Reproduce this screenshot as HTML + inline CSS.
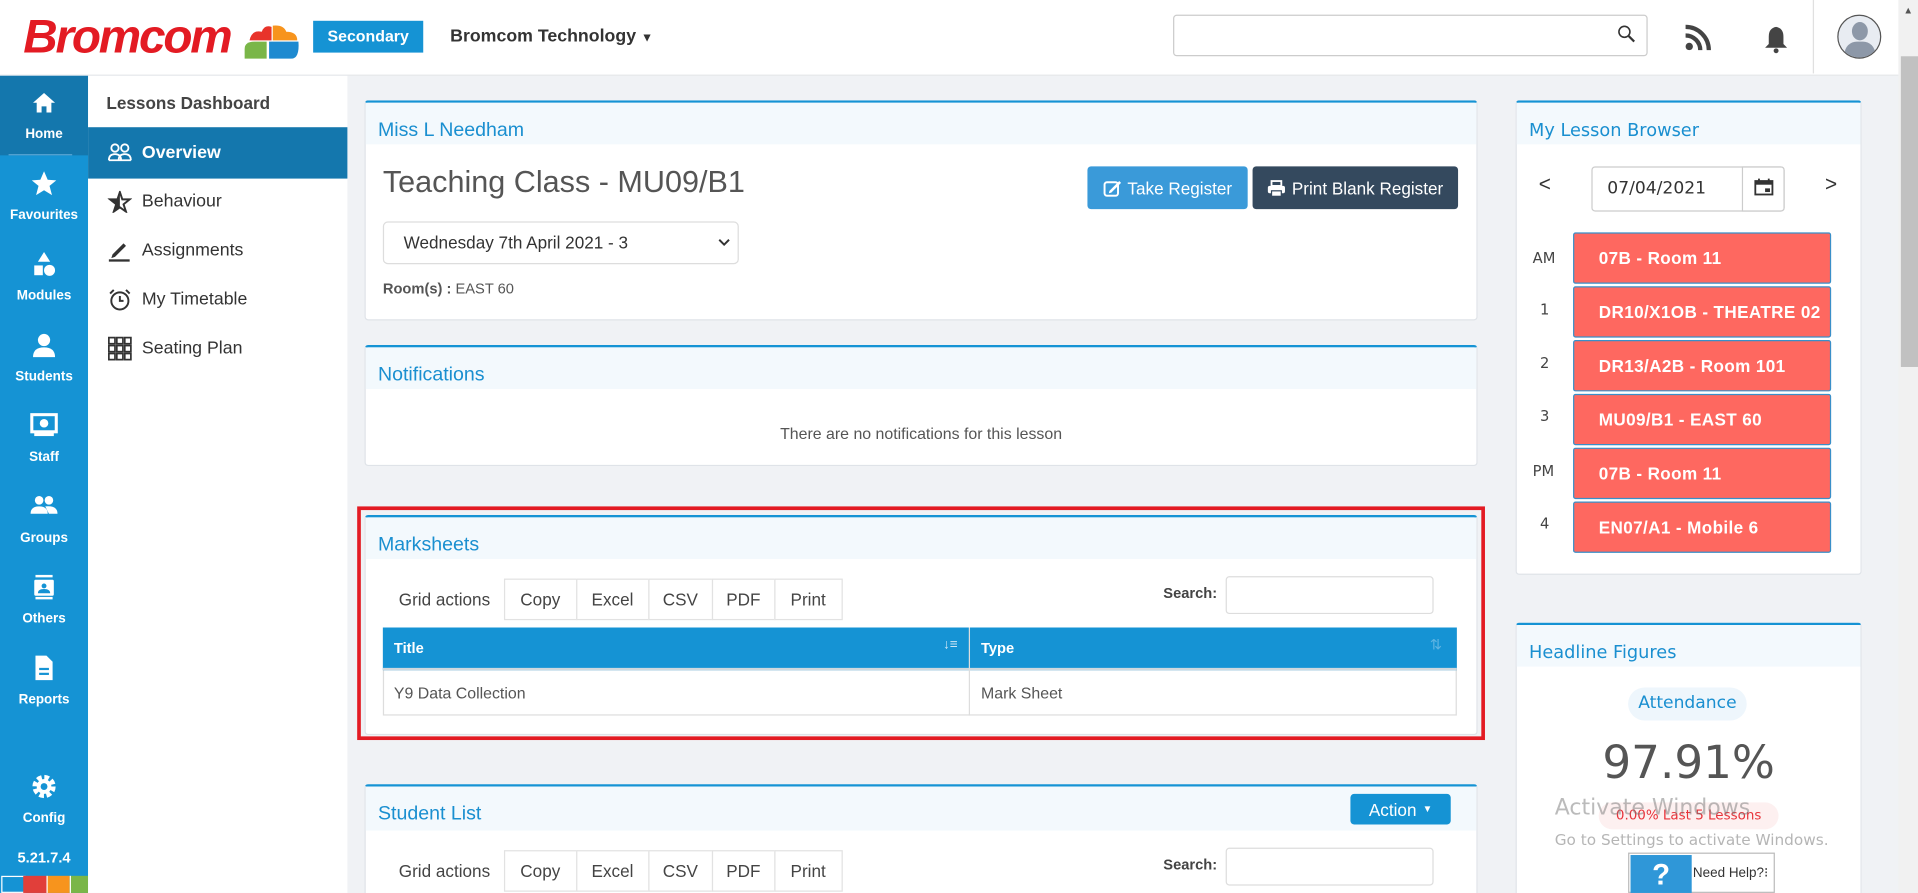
<!DOCTYPE html>
<html><head><meta charset="utf-8">
<style>
*{box-sizing:border-box;margin:0;padding:0}
html,body{width:1918px;height:893px;overflow:hidden;background:#f0f2f5;font-family:"Liberation Sans",Arial,sans-serif}
#w{position:absolute;left:0;top:0;width:1568px;height:730px;transform:scale(1.22321);transform-origin:0 0;background:#f0f2f5;overflow:hidden}
.a{position:absolute}
.top{left:0;top:0;width:1552px;height:62px;background:#fff;border-bottom:1px solid #e4e6ea}
.nav1{left:0;top:62px;width:72px;height:668px;background:#1593d4}
.ni{position:absolute;left:0;width:72px;text-align:center;color:#fff;font-size:11px;font-weight:bold}
.nav2{left:72px;top:62px;width:212px;height:668px;background:#fff}
.n2{position:absolute;left:16px;font-size:14.5px;color:#333;display:flex;align-items:center;gap:8px}
.card{position:absolute;background:#fff;border:1px solid #dfe3e8;border-top:2px solid #1593d4;border-radius:3px}
.ch{background:#f3f9fd;height:34px;padding-left:10px;font-size:16px;color:#1a8fd0;line-height:42px}
.btn{position:absolute;color:#fff;font-size:14px;border-radius:3px;display:flex;align-items:center;justify-content:center;gap:5px}
.ga{position:absolute;display:flex;align-items:center;font-size:14px;color:#444}
.ga .g{border:1px solid #e2e2e2;height:34px;line-height:32px;text-align:center;margin-left:-1px;background:#fff}
.lb{position:absolute;left:47px;width:211px;height:42px;background:#fe6860;border:1px solid #3a8fc8;border-radius:2px;color:#fff;font-weight:bold;font-size:14px;line-height:40px;padding-left:20px;font-family:"Liberation Sans",sans-serif;letter-spacing:.3px;white-space:nowrap}
.ll{position:absolute;left:14px;font-size:12px;color:#444;font-family:"DejaVu Sans",sans-serif}
</style></head><body><div id="w">

<div class="a top"></div>
<div class="a" style="left:19px;top:11px;font-size:39px;font-weight:bold;font-style:italic;color:#e31b23;letter-spacing:-1.8px;line-height:40px">Bromcom</div>
<svg class="a" style="left:198px;top:20px" width="48" height="28" viewBox="0 0 48 28"><path d="M2 28 L2 20 Q2 14 10 14 L20 14 L20 28Z" fill="#7ab648"/><path d="M22 14 L46 14 Q47 28 40 28 L22 28Z" fill="#1e8ad0"/><path d="M6 13 Q8 4 16 6 Q18 0 24 2 L24 13Z" fill="#e8332a"/><path d="M25 1 Q34 0 36 6 Q45 6 45 13 L25 13Z" fill="#f7941d"/></svg>
<div class="a" style="left:256px;top:17px;width:90px;height:26px;background:#1593d4;color:#fff;font-weight:bold;font-size:13px;line-height:26px;text-align:center">Secondary</div>
<div class="a" style="left:368px;top:22px;font-size:14.5px;font-weight:bold;color:#333">Bromcom Technology <span style="font-size:10px">▼</span></div>
<div class="a" style="left:959px;top:12px;width:388px;height:34px;border:1px solid #ccc;border-radius:3px"></div>
<svg class="a" style="left:1322px;top:20px" width="16" height="16" viewBox="0 0 16 16"><circle cx="6" cy="6" r="4.5" stroke="#333" stroke-width="1.3" fill="none"/><path d="M9.5 9.5 L14 14" stroke="#333" stroke-width="1.8"/></svg>
<svg class="a" style="left:1377px;top:20px" width="22" height="22" viewBox="0 0 22 22"><circle cx="4" cy="18" r="3" fill="#444"/><path d="M1 9 A12 12 0 0 1 13 21" stroke="#444" stroke-width="3.5" fill="none"/><path d="M1 2 A19 19 0 0 1 20 21" stroke="#444" stroke-width="3.5" fill="none"/></svg>
<svg class="a" style="left:1442px;top:20px" width="20" height="24" viewBox="0 0 20 24"><path d="M10 2 Q16 3 16 10 L16 16 L19 19 L1 19 L4 16 L4 10 Q4 3 10 2Z" fill="#444"/><circle cx="10" cy="21.5" r="2" fill="#444"/></svg>
<div class="a" style="left:1482px;top:0;width:1px;height:60px;background:#e0e0e0"></div>
<div class="a" style="left:1502px;top:12px;width:36px;height:36px;border-radius:50%;border:1px solid #555;background:#e8ecf2;overflow:hidden"><div style="position:absolute;left:11px;top:5px;width:13px;height:15px;border-radius:50%;background:#8d98a8"></div><div style="position:absolute;left:5px;top:21px;width:25px;height:18px;border-radius:10px 10px 0 0;background:#8d98a8"></div></div>
<div class="a" style="left:1552px;top:0;width:16px;height:730px;background:#f1f1f1"></div>
<div class="a" style="left:1554px;top:46px;width:14px;height:254px;background:#c1c1c1"></div>
<div class="a" style="left:1556px;top:4px;font-size:8px;color:#555">▲</div>

<div class="a nav1"></div>
<div class="a" style="left:0;top:62px;width:72px;height:65px;background:#1477ad"></div>
<div class="a" style="left:7px;top:126px;width:52px;height:1px;background:#5aa7d4"></div>
<div class="ni" style="top:74px"><svg width="20" height="20" viewBox="0 0 20 20"><path d="M10 2 L19 10 L16 10 L16 18 L12 18 L12 13 L8 13 L8 18 L4 18 L4 10 L1 10Z" fill="#fff"/></svg><div style="margin-top:7px">Home</div></div>
<div class="ni" style="top:139px"><svg width="22" height="22" viewBox="0 0 22 22"><path d="M11 1 L14 8 L21 8.5 L15.5 13 L17.5 20.5 L11 16.5 L4.5 20.5 L6.5 13 L1 8.5 L8 8Z" fill="#fff"/></svg><div style="margin-top:6px">Favourites</div></div>
<div class="ni" style="top:205px"><svg width="22" height="22" viewBox="0 0 22 22"><path d="M11 1 L16 9 L6 9Z" fill="#fff"/><rect x="3" y="12" width="7" height="8" fill="#fff"/><circle cx="15.5" cy="16" r="4.5" fill="#fff"/></svg><div style="margin-top:6px">Modules</div></div>
<div class="ni" style="top:271px"><svg width="22" height="22" viewBox="0 0 22 22"><circle cx="11" cy="7" r="5" fill="#fff"/><path d="M2 21 Q2 13 11 13 Q20 13 20 21Z" fill="#fff"/></svg><div style="margin-top:6px">Students</div></div>
<div class="ni" style="top:337px"><svg width="24" height="22" viewBox="0 0 24 22"><rect x="2" y="2" width="20" height="14" fill="none" stroke="#fff" stroke-width="2.5"/><circle cx="12" cy="9" r="3.5" fill="#fff"/><rect x="4" y="17" width="16" height="2.5" fill="#fff"/></svg><div style="margin-top:6px">Staff</div></div>
<div class="ni" style="top:403px"><svg width="24" height="22" viewBox="0 0 24 22"><circle cx="8" cy="6" r="3.5" fill="#fff"/><circle cx="16" cy="6" r="3.5" fill="#fff"/><path d="M1 17 Q1 11 8 11 Q15 11 15 17Z" fill="#fff"/><path d="M13 11 Q23 10 23 17 L16 17Z" fill="#fff"/></svg><div style="margin-top:6px">Groups</div></div>
<div class="ni" style="top:469px"><svg width="22" height="22" viewBox="0 0 22 22"><rect x="4" y="1" width="14" height="2" fill="#fff"/><rect x="3" y="5" width="16" height="13" rx="1" fill="#fff"/><rect x="4" y="19" width="14" height="2" fill="#fff"/><circle cx="11" cy="10" r="2" fill="#1593d4"/><path d="M6 16 Q6 12.5 11 12.5 Q16 12.5 16 16Z" fill="#1593d4"/></svg><div style="margin-top:6px">Others</div></div>
<div class="ni" style="top:535px"><svg width="22" height="22" viewBox="0 0 22 22"><path d="M4 1 L13 1 L18 6 L18 21 L4 21Z" fill="#fff"/><rect x="7" y="11" width="8" height="1.8" fill="#1593d4"/><rect x="7" y="15" width="8" height="1.8" fill="#1593d4"/></svg><div style="margin-top:6px">Reports</div></div>
<div class="ni" style="top:632px"><svg width="22" height="22" viewBox="0 0 22 22"><circle cx="11" cy="11" r="7" fill="none" stroke="#fff" stroke-width="5" stroke-dasharray="3.5 2"/><circle cx="11" cy="11" r="6" fill="#fff"/><circle cx="11" cy="11" r="2.8" fill="#1593d4"/></svg><div style="margin-top:6px">Config</div></div>
<div class="ni" style="top:694px;font-size:12px">5.21.7.4</div>
<div class="a" style="left:1px;top:716px;width:20px;height:14px;background:#1593d4;border:1px solid #fff"></div>
<div class="a" style="left:19px;top:716px;width:19px;height:14px;background:#e13f3a"></div>
<div class="a" style="left:38px;top:716px;width:19px;height:14px;background:#f7941d;border-left:1px solid #fff"></div>
<div class="a" style="left:57px;top:716px;width:15px;height:14px;background:#7ab648;border-left:1px solid #fff"></div>

<div class="a nav2"></div>
<div class="a" style="left:87px;top:76px;font-size:14px;font-weight:bold;color:#444">Lessons Dashboard</div>
<div class="a" style="left:72px;top:104px;width:212px;height:42px;background:#1477ad"></div>
<div class="n2" style="left:88px;top:116px;color:#fff;font-weight:bold"><svg width="20" height="18" viewBox="0 0 20 18"><circle cx="6" cy="5" r="3" fill="none" stroke="#fff" stroke-width="1.5"/><circle cx="14" cy="5" r="3" fill="none" stroke="#fff" stroke-width="1.5"/><path d="M1 15 Q1 10 6 10 Q11 10 11 15 M9 15 Q9 10 14 10 Q19 10 19 15 M1 15 L19 15" fill="none" stroke="#fff" stroke-width="1.5"/></svg>Overview</div>
<div class="n2" style="left:88px;top:156px"><svg width="20" height="18" viewBox="0 0 20 18"><path d="M10 1 L12 7 L18 7 L13 11 L15 17 L10 13.5 L5 17 L7 11 L2 7 L8 7Z" fill="none" stroke="#333" stroke-width="1.6"/><path d="M10 1 L10 13.5 L5 17 L7 11 L2 7 L8 7Z" fill="#333"/></svg>Behaviour</div>
<div class="n2" style="left:88px;top:196px"><svg width="20" height="18" viewBox="0 0 20 18"><path d="M4 12 L13 3 L15 5 L6 14 L3 15Z" fill="#333"/><rect x="1" y="16" width="17" height="2" fill="#333"/></svg>Assignments</div>
<div class="n2" style="left:88px;top:235px"><svg width="20" height="20" viewBox="0 0 20 20"><circle cx="10" cy="11" r="7" fill="none" stroke="#333" stroke-width="1.6"/><path d="M10 7 L10 11 L13 11" fill="none" stroke="#333" stroke-width="1.6"/><path d="M2 5 L5 2 M18 5 L15 2" stroke="#333" stroke-width="1.6"/></svg>My Timetable</div>
<div class="n2" style="left:88px;top:275px"><svg width="20" height="20" viewBox="0 0 20 20" fill="none" stroke="#333" stroke-width="1.4"><rect x="1" y="1" width="5" height="5"/><rect x="7.5" y="1" width="5" height="5"/><rect x="14" y="1" width="5" height="5"/><rect x="1" y="7.5" width="5" height="5"/><rect x="7.5" y="7.5" width="5" height="5"/><rect x="14" y="7.5" width="5" height="5"/><rect x="1" y="14" width="5" height="5"/><rect x="7.5" y="14" width="5" height="5"/><rect x="14" y="14" width="5" height="5"/></svg>Seating Plan</div>

<!-- card 1 -->
<div class="card" style="left:298px;top:82px;width:910px;height:180px"><div class="ch" style="line-height:46px">Miss L Needham</div></div>
<div class="a" style="left:313px;top:135px;font-size:25px;color:#555">Teaching Class - MU09/B1</div>
<div class="btn" style="left:889px;top:136px;width:131px;height:35px;background:#3a9ad9"><svg width="15" height="14" viewBox="0 0 15 14"><rect x="1" y="2" width="11" height="11" rx="2" fill="none" stroke="#fff" stroke-width="1.6"/><path d="M5 9 L13 1 L14.5 2.5 L6.5 10.5 L4.5 11Z" fill="#fff"/></svg>Take Register</div>
<div class="btn" style="left:1024px;top:136px;width:168px;height:35px;background:#34495e"><svg width="15" height="14" viewBox="0 0 15 14"><rect x="3.5" y="1" width="8" height="4" fill="none" stroke="#fff" stroke-width="1.5"/><rect x="0.5" y="5" width="14" height="6" rx="1.5" fill="#fff"/><rect x="3.5" y="9" width="8" height="4.5" fill="#fff" stroke="#34495e" stroke-width="1"/></svg>Print Blank Register</div>
<div class="a" style="left:313px;top:181px;width:291px;height:35px;border:1px solid #ddd;border-radius:4px;font-size:14px;color:#333;line-height:33px;padding-left:16px">Wednesday 7th April 2021 - 3</div>
<svg class="a" style="left:587px;top:194px" width="10" height="8" viewBox="0 0 10 8"><path d="M1 2 L5 6 L9 2" fill="none" stroke="#333" stroke-width="1.6"/></svg>
<div class="a" style="left:313px;top:229px;font-size:12px;color:#555"><b>Room(s) :</b> EAST 60</div>

<!-- card 2 -->
<div class="card" style="left:298px;top:282px;width:910px;height:99px"><div class="ch" style="line-height:46px">Notifications</div></div>
<div class="a" style="left:298px;top:347px;width:910px;text-align:center;font-size:13px;color:#555">There are no notifications for this lesson</div>

<!-- red highlight + marksheets -->
<div class="a" style="left:292px;top:414px;width:922px;height:191px;border:3px solid #e31b23"></div>
<div class="card" style="left:298px;top:421px;width:910px;height:180px"><div class="ch" style="line-height:46px">Marksheets</div></div>
<div class="ga" style="left:326px;top:473px"><span style="margin-right:12px">Grid actions</span><div class="g" style="width:60px">Copy</div><div class="g" style="width:60px">Excel</div><div class="g" style="width:53px">CSV</div><div class="g" style="width:52px">PDF</div><div class="g" style="width:56px">Print</div></div>
<div class="a" style="left:951px;top:478px;font-size:12px;font-weight:bold;color:#444">Search:</div>
<div class="a" style="left:1002px;top:471px;width:170px;height:31px;border:1px solid #ddd;border-radius:3px"></div>
<div class="a" style="left:313px;top:513px;width:878px;height:72px;border:1px solid #ddd"></div>
<div class="a" style="left:313px;top:513px;width:878px;height:35px;background:#1593d4;border-bottom:2px solid #cfd8de"></div>
<div class="a" style="left:792px;top:513px;width:1px;height:72px;background:#ddd"></div>
<div class="a" style="left:322px;top:523px;font-size:12px;font-weight:bold;color:#fff">Title</div>
<div class="a" style="left:802px;top:523px;font-size:12px;font-weight:bold;color:#fff">Type</div>
<div class="a" style="left:771px;top:521px;font-size:11px;color:#cde6f5;font-weight:bold">↓≡</div>
<div class="a" style="left:1169px;top:520px;font-size:12px;color:#5fb4e2">⇅</div>
<div class="a" style="left:322px;top:559px;font-size:13px;color:#555">Y9 Data Collection</div>
<div class="a" style="left:802px;top:559px;font-size:13px;color:#555">Mark Sheet</div>

<!-- student list -->
<div class="card" style="left:298px;top:641px;width:910px;height:100px"><div class="ch" style="line-height:46px;height:36px">Student List</div></div>
<div class="btn" style="left:1104px;top:649px;width:82px;height:25px;background:#1593d4;font-size:14px">Action <span style="font-size:8px">▼</span></div>
<div class="ga" style="left:326px;top:695px"><span style="margin-right:12px">Grid actions</span><div class="g" style="width:60px">Copy</div><div class="g" style="width:60px">Excel</div><div class="g" style="width:53px">CSV</div><div class="g" style="width:52px">PDF</div><div class="g" style="width:56px">Print</div></div>
<div class="a" style="left:951px;top:700px;font-size:12px;font-weight:bold;color:#444">Search:</div>
<div class="a" style="left:1002px;top:693px;width:170px;height:31px;border:1px solid #ddd;border-radius:3px"></div>

<!-- right column -->
<div class="card" style="left:1239px;top:82px;width:283px;height:388px"><div class="ch" style="font-family:'DejaVu Sans',sans-serif;font-size:14.5px;line-height:46px">My Lesson Browser</div></div>
<div class="a" style="left:1258px;top:141px;font-size:17px;color:#333">&lt;</div>
<div class="a" style="left:1492px;top:141px;font-size:17px;color:#333">&gt;</div>
<div class="a" style="left:1301px;top:136px;width:158px;height:37px;border:1px solid #ccc;border-radius:3px;font-family:'DejaVu Sans',sans-serif;font-size:14px;color:#333;line-height:35px;padding-left:12px">07/04/2021</div>
<div class="a" style="left:1424px;top:136px;width:35px;height:37px;border:1px solid #ccc;border-radius:0 3px 3px 0;background:#fff"></div>
<svg class="a" style="left:1434px;top:145px" width="16" height="16" viewBox="0 0 16 16"><rect x="1" y="3" width="14" height="11" fill="none" stroke="#333" stroke-width="1.5"/><rect x="1" y="3" width="14" height="3" fill="#333"/><path d="M4 1 L4 4 M12 1 L12 4" stroke="#333" stroke-width="1.5"/><rect x="9" y="9" width="4" height="3" fill="#333"/></svg>
<div class="a" style="left:1239px;top:0">
<div class="ll" style="top:204px">AM</div><div class="lb" style="top:190px">07B - Room 11</div>
<div class="ll" style="top:246px;left:20px">1</div><div class="lb" style="top:234px">DR10/X1OB - THEATRE 02</div>
<div class="ll" style="top:290px;left:20px">2</div><div class="lb" style="top:278px">DR13/A2B - Room 101</div>
<div class="ll" style="top:333px;left:20px">3</div><div class="lb" style="top:322px">MU09/B1 - EAST 60</div>
<div class="ll" style="top:378px">PM</div><div class="lb" style="top:366px">07B - Room 11</div>
<div class="ll" style="top:421px;left:20px">4</div><div class="lb" style="top:410px">EN07/A1 - Mobile 6</div>
</div>

<div class="card" style="left:1239px;top:509px;width:283px;height:240px"><div class="ch" style="font-family:'DejaVu Sans',sans-serif;font-size:14.5px;line-height:46px">Headline Figures</div></div>
<div class="a" style="left:1331px;top:562px;width:97px;height:27px;border-radius:14px;background:#eef6fc;color:#1a8fd0;font-family:'DejaVu Sans',sans-serif;font-size:14px;line-height:27px;text-align:center">Attendance</div>
<div class="a" style="left:1239px;top:602px;width:283px;text-align:center;font-family:'DejaVu Sans',sans-serif;font-size:37px;color:#555">97.91%</div>
<div class="a" style="left:1307px;top:656px;width:147px;height:22px;border-radius:11px;background:#fdf0f0;color:#e8333a;font-family:'DejaVu Sans',sans-serif;font-size:11px;line-height:22px;text-align:center">0.00% Last 5 Lessons</div>
<div class="a" style="left:1271px;top:650px;font-family:'DejaVu Sans',sans-serif;font-size:18px;color:rgba(120,120,120,.5)">Activate Windows</div>
<div class="a" style="left:1271px;top:679px;font-family:'DejaVu Sans',sans-serif;font-size:12.5px;color:rgba(120,120,120,.55)">Go to Settings to activate Windows.</div>
<div class="a" style="left:1331px;top:697px;width:120px;height:33px;border:1px solid #bbb;background:#fff"></div>
<div class="a" style="left:1333px;top:699px;width:50px;height:31px;background:#2f97d8;color:#fff;font-weight:bold;font-size:24px;text-align:center;line-height:34px">?</div>
<div class="a" style="left:1384px;top:707px;font-size:11px;color:#333">Need Help?⁝</div>

</div></body></html>
